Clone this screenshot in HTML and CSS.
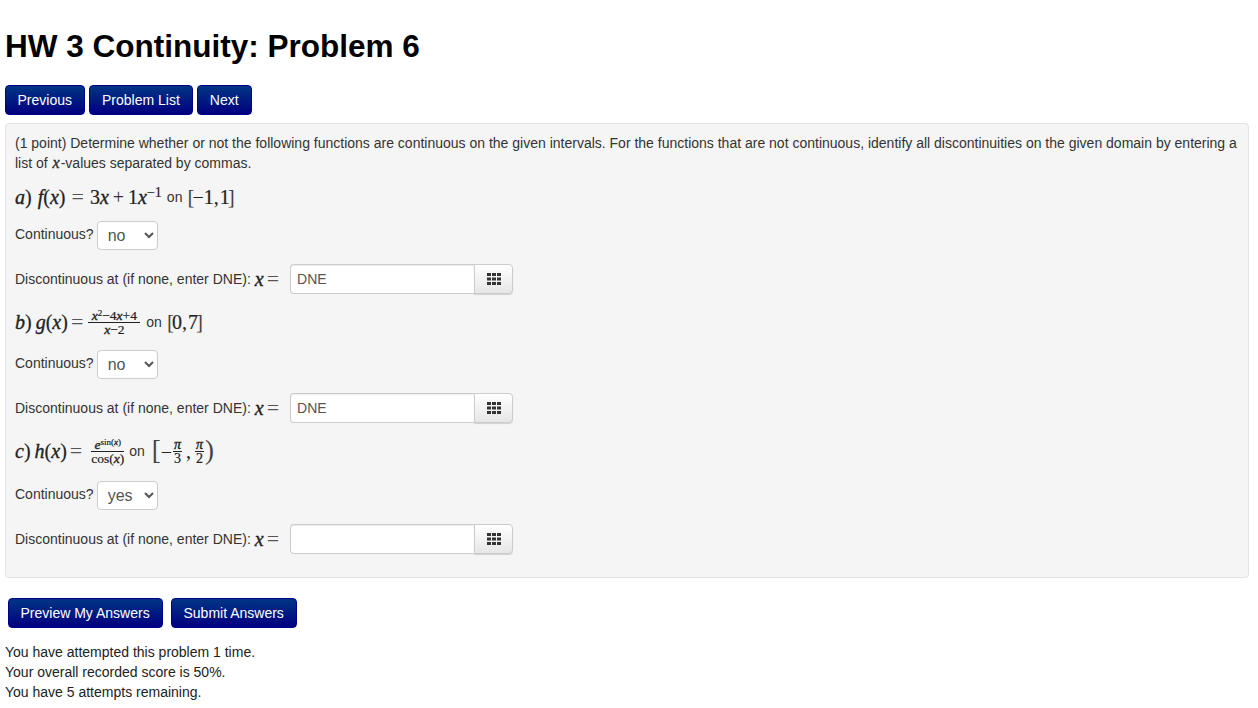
FILE: index.html
```html
<!DOCTYPE html>
<html lang="en">
<head>
<meta charset="utf-8">
<title>HW 3 Continuity: Problem 6</title>
<link rel="stylesheet" href="styles.css">
</head>
<body>
<h1 class="title">HW 3 Continuity: Problem 6</h1>
<nav class="nav">
  <a class="btn">Previous</a>
  <a class="btn">Problem List</a>
  <a class="btn">Next</a>
</nav>
<main class="panel">
  <p class="intro"><span class="line">(1 point) Determine whether or not the following functions are continuous on the given intervals. For the functions that are not continuous, identify all discontinuities on the given domain by entering a</span><span>list of </span><i class="mv inline">x</i><span>-values separated by commas.</span></p>

  <div class="row math-a">
    <span class="math"><i class="mv">a</i><span class="mn">)</span><i class="mv fn">f</i><span class="mn">(</span><i class="mv">x</i><span class="mn">)</span><span class="rel">=</span><span class="mn">3</span><i class="mv">x</i><span class="bin">+</span><span class="mn">1</span><i class="mv">x</i><sup class="sup">−1</sup></span>
    <span class="on">on</span>
    <span class="math"><span class="br open">[</span>−<span class="mn">1</span><span class="comma">,</span><span class="mn">1</span><span class="br close">]</span></span>
  </div>
  <div class="row"><span class="lbl-sel">Continuous?</span><select class="sel"><option>no</option><option>yes</option></select></div>
  <div class="row"><span class="lbl-inp">Discontinuous at (if none, enter DNE):</span><span class="math eq"><i class="mv">x</i><span class="rel">=</span></span><div class="answer"><input class="inp" value="DNE"><span class="addon"><svg width="14" height="12" viewBox="0 0 14 12"><path class="ic" d="M0 0h4v3H0zM5 0h4v3H5zM10 0h4v3h-4zM0 4.500h4v3H0zM5 4.500h4v3H5zM10 4.500h4v3h-4zM0 9h4v3H0zM5 9h4v3H5zM10 9h4v3h-4z"/></svg></span></div></div>

  <div class="row math-b">
    <span class="math"><i class="mv">b</i><span class="mn">)</span><i class="mv fn tight">g</i><span class="mn">(</span><i class="mv">x</i><span class="mn">)</span><span class="rel">=</span></span>
    <span class="frac frac-b"><span class="num"><i class="mv">x</i><sup class="sup2">2</sup>−4<i class="mv">x</i>+4</span><span class="den"><i class="mv">x</i>−2</span></span>
    <span class="on">on</span>
    <span class="math"><span class="br open">[</span><span class="mn">0</span><span class="comma">,</span><span class="mn">7</span><span class="br close">]</span></span>
  </div>
  <div class="row"><span class="lbl-sel">Continuous?</span><select class="sel"><option>no</option><option>yes</option></select></div>
  <div class="row"><span class="lbl-inp">Discontinuous at (if none, enter DNE):</span><span class="math eq"><i class="mv">x</i><span class="rel">=</span></span><div class="answer"><input class="inp" value="DNE"><span class="addon"><svg width="14" height="12" viewBox="0 0 14 12"><path class="ic" d="M0 0h4v3H0zM5 0h4v3H5zM10 0h4v3h-4zM0 4.500h4v3H0zM5 4.500h4v3H5zM10 4.500h4v3h-4zM0 9h4v3H0zM5 9h4v3H5zM10 9h4v3h-4z"/></svg></span></div></div>

  <div class="row math-c">
    <span class="math"><i class="mv">c</i><span class="mn">)</span><i class="mv fn tight">h</i><span class="mn">(</span><i class="mv">x</i><span class="mn">)</span><span class="rel">=</span></span>
    <span class="frac frac-c"><span class="num"><i class="mv">e</i><sup class="sup3">sin(<i class="mv">x</i>)</sup></span><span class="den">cos(<i class="mv">x</i>)</span></span>
    <span class="on on-c">on</span>
    <span class="math"><span class="br big">[</span>−</span><span class="frac frac-pi"><span class="num"><i class="mv">π</i></span><span class="den">3</span></span><span class="math comma-pi">,</span><span class="frac frac-pi"><span class="num"><i class="mv">π</i></span><span class="den">2</span></span><span class="math"><span class="br big">)</span></span>
  </div>
  <div class="row"><span class="lbl-sel">Continuous?</span><select class="sel"><option>yes</option><option>no</option></select></div>
  <div class="row"><span class="lbl-inp">Discontinuous at (if none, enter DNE):</span><span class="math eq"><i class="mv">x</i><span class="rel">=</span></span><div class="answer"><input class="inp"><span class="addon"><svg width="14" height="12" viewBox="0 0 14 12"><path class="ic" d="M0 0h4v3H0zM5 0h4v3H5zM10 0h4v3h-4zM0 4.500h4v3H0zM5 4.500h4v3H5zM10 4.500h4v3h-4zM0 9h4v3H0zM5 9h4v3H5zM10 9h4v3h-4z"/></svg></span></div></div>
</main>
<div class="actions">
  <a class="btn">Preview My Answers</a>
  <a class="btn btn-submit">Submit Answers</a>
</div>
<div class="status">
  <div>You have attempted this problem 1 time.</div>
  <div>Your overall recorded score is 50%.</div>
  <div>You have 5 attempts remaining.</div>
</div>
</body>
</html>
```
FILE: styles.css
```css
* { box-sizing: border-box; }
html, body { margin: 0; padding: 0; }
body {
  padding: 0 9px 0 5px;
  font-family: "Liberation Sans", Arial, sans-serif;
  font-size: 14px;
  line-height: 20px;
  color: #333;
  background: #fff;
}
.title {
  margin: 0;
  padding-top: 26px;
  height: 85px;
  font-size: 31.500px;
  line-height: 40px;
  font-weight: 700;
  color: #000;
}
.nav { display: flex; gap: 4px; height: 30px; }
.btn {
  display: inline-flex;
  align-items: center;
  justify-content: center;
  height: 30px;
  padding: 0 12.500px 0 11.500px;
  border: 1px solid #00008b;
  border-radius: 4px;
  background: linear-gradient(#003584, #000080);
  color: #fff;
  font-size: 14px;
}
.btn-submit { width: 126px; padding: 0 1px 0 0; }
.panel {
  display: flex;
  flex-direction: column;
  gap: 14px;
  margin-top: 8px;
  height: 455px;
  padding: 9px 9px 0;
  background: #f5f5f5;
  border: 1px solid #e3e3e3;
  border-radius: 4px;
}
.intro { margin: 0; color: #333; }
.line { display: block; }
.row { display: flex; align-items: center; white-space: pre; }
.lbl-sel { padding-bottom: 3px; }
.lbl-inp { padding-bottom: 1px; }
.math-a { height: 20px; }
.math-b { height: 28px; }
.math-c { height: 30px; padding-bottom: 2px; }
.math {
  font-family: "Liberation Serif", serif;
  font-size: 20px;
  color: #222;
  white-space: pre;
}
.mv { font-style: italic; font-weight: 400; -webkit-text-stroke: .35px #222; }
.mv.inline {
  display: inline-block;
  margin: 0 1px;
  font-family: "Liberation Serif", serif;
  font-size: 16px;
  line-height: 14px;
}
.fn { margin-left: 6px; }
.fn.tight { margin-left: 4px; }
.mn { font-weight: 400; -webkit-text-stroke: .2px #222; }
.rel { margin: 0 6px; font-size: 22px; line-height: 0; font-weight: 400; color: #555; }
.math-b .rel, .math-c .rel { margin: 0 4px 0 3px; }
.bin { margin: 0 4px; color: #333; }
.sup { font-size: 14px; -webkit-text-stroke: .2px #222; vertical-align: 7px; line-height: 0; }
.br { font-size: 21px; font-weight: 400; line-height: 20px; color: #444; }
.br.open { margin-right: -2px; }
.br.close { margin-left: -2px; }
.br.big { font-size: 27px; }
.comma { margin-right: 1px; }
.comma-pi { margin: 0 3px; }
.on { margin: 0 5px; }
.on-c { margin-right: 7px; }
.frac {
  display: inline-flex;
  flex-direction: column;
  align-items: center;
  font-family: "Liberation Serif", serif;
  font-size: 13.500px;
  line-height: 13px;
  color: #222;
  -webkit-text-stroke: .2px #222;
}
.num { border-bottom: 1px solid #222; align-self: stretch; text-align: center; }
.frac-b { margin: 0 1px 0 1px; width: 52px; white-space: nowrap; }
.frac-c { width: 33px; margin-left: 5px; font-size: 13.500px; }
.frac-pi { width: 9px; font-size: 14px; margin: 0 1px; }
.sup2, .sup3 { font-size: 9px; line-height: 0; vertical-align: 4px; }
.eq { margin: 0 11px 0 4px; }
.eq .rel { margin: 0 0 0 3px; }
.sel {
  width: 61px;
  height: 29px;
  margin-left: 3px;
  padding: 0 6px;
  border: 1px solid #ccc;
  border-radius: 4px;
  background: #fff;
  color: #555;
  font-family: "Liberation Sans", Arial, sans-serif;
  font-size: 16px;
}
.answer { display: flex; height: 30px; }
.inp {
  width: 184px;
  height: 30px;
  padding: 0 6px;
  border: 1px solid #ccc;
  border-right: 0;
  border-radius: 4px 0 0 4px;
  background: #fff;
  color: #555;
  font-family: "Liberation Sans", Arial, sans-serif;
  font-size: 14px;
  box-shadow: inset 0 1px 1px rgba(0, 0, 0, .075);
}
.addon {
  display: flex;
  align-items: center;
  justify-content: center;
  width: 39px;
  height: 30px;
  border: 1px solid #ccc;
  border-radius: 0 4px 4px 0;
  background: linear-gradient(#fff, #e6e6e6);
  box-shadow: 0 1px 1px rgba(0, 0, 0, .15);
}
.ic { fill: #333; }
.actions { display: flex; gap: 8px; margin-top: 20px; padding-left: 3px; }
.status { margin-top: 14px; color: #222; }
```
